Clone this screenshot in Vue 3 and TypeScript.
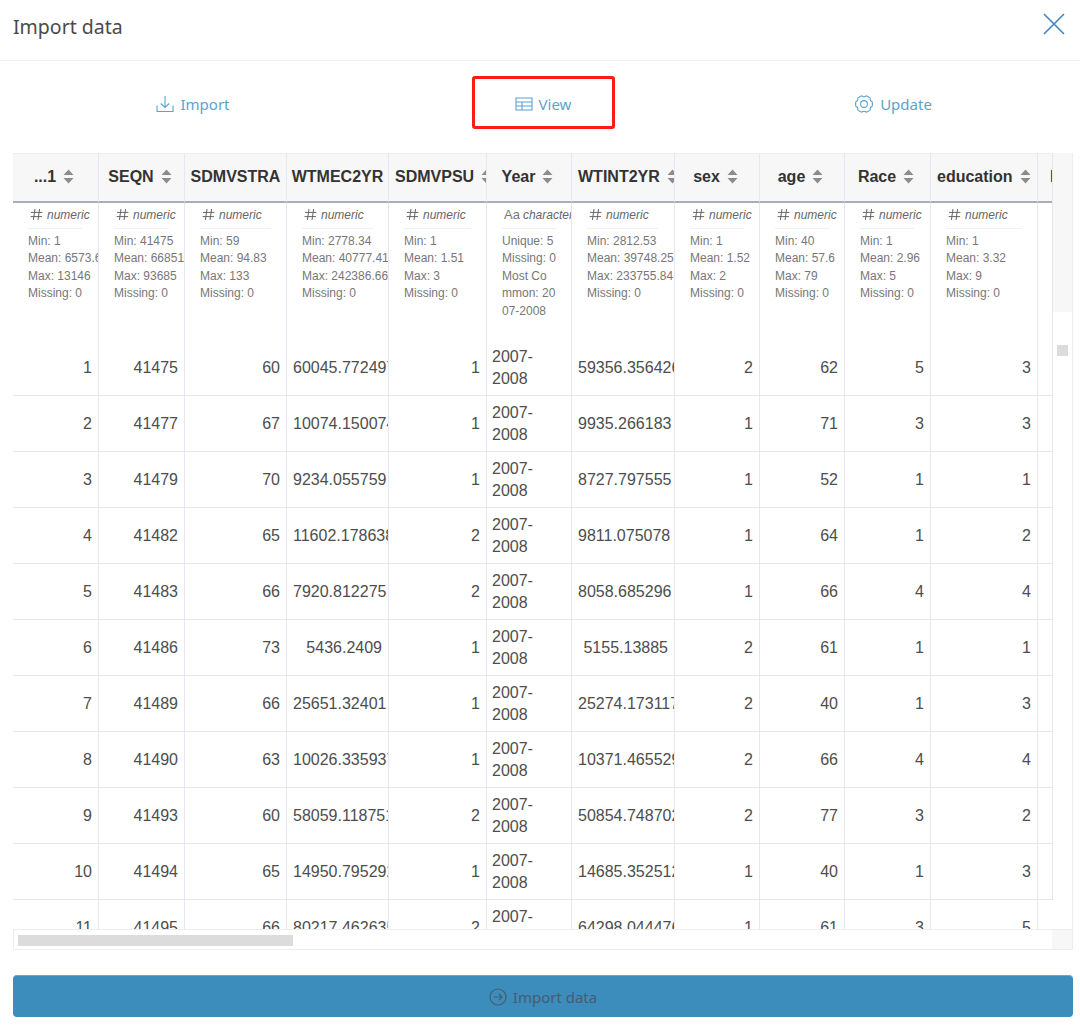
<script setup lang="ts">
interface Col { name: string; width: number; sort: boolean; kind: string; stats: string[]; }
const cols: Col[] = [
  { name: '...1', width: 86, sort: true, kind: 'numeric', stats: ['Min: 1', 'Mean: 6573.68', 'Max: 13146', 'Missing: 0'] },
  { name: 'SEQN', width: 86, sort: true, kind: 'numeric', stats: ['Min: 41475', 'Mean: 66851', 'Max: 93685', 'Missing: 0'] },
  { name: 'SDMVSTRA', width: 102, sort: false, kind: 'numeric', stats: ['Min: 59', 'Mean: 94.83', 'Max: 133', 'Missing: 0'] },
  { name: 'WTMEC2YR', width: 102, sort: false, kind: 'numeric', stats: ['Min: 2778.34', 'Mean: 40777.41', 'Max: 242386.66', 'Missing: 0'] },
  { name: 'SDMVPSU', width: 98, sort: true, kind: 'numeric', stats: ['Min: 1', 'Mean: 1.51', 'Max: 3', 'Missing: 0'] },
  { name: 'Year', width: 85, sort: true, kind: 'character', stats: ['Unique: 5', 'Missing: 0', 'Most Co', 'mmon: 20', '07-2008'] },
  { name: 'WTINT2YR', width: 103, sort: true, kind: 'numeric', stats: ['Min: 2812.53', 'Mean: 39748.25', 'Max: 233755.84', 'Missing: 0'] },
  { name: 'sex', width: 85, sort: true, kind: 'numeric', stats: ['Min: 1', 'Mean: 1.52', 'Max: 2', 'Missing: 0'] },
  { name: 'age', width: 85, sort: true, kind: 'numeric', stats: ['Min: 40', 'Mean: 57.6', 'Max: 79', 'Missing: 0'] },
  { name: 'Race', width: 86, sort: true, kind: 'numeric', stats: ['Min: 1', 'Mean: 2.96', 'Max: 5', 'Missing: 0'] },
  { name: 'education', width: 107, sort: true, kind: 'numeric', stats: ['Min: 1', 'Mean: 3.32', 'Max: 9', 'Missing: 0'] },
];
const rows: string[][] = [
  ['1', '41475', '60', '60045.772497', '1', '2007-2008', '59356.356426', '2', '62', '5', '3'],
  ['2', '41477', '67', '10074.150074', '1', '2007-2008', '9935.266183', '1', '71', '3', '3'],
  ['3', '41479', '70', '9234.055759', '1', '2007-2008', '8727.797555', '1', '52', '1', '1'],
  ['4', '41482', '65', '11602.178638', '2', '2007-2008', '9811.075078', '1', '64', '1', '2'],
  ['5', '41483', '66', '7920.812275', '2', '2007-2008', '8058.685296', '1', '66', '4', '4'],
  ['6', '41486', '73', '5436.2409', '1', '2007-2008', '5155.13885', '2', '61', '1', '1'],
  ['7', '41489', '66', '25651.32401', '1', '2007-2008', '25274.173117', '2', '40', '1', '3'],
  ['8', '41490', '63', '10026.335937', '1', '2007-2008', '10371.465529', '2', '66', '4', '4'],
  ['9', '41493', '60', '58059.118751', '2', '2007-2008', '50854.748702', '2', '77', '3', '2'],
  ['10', '41494', '65', '14950.795292', '1', '2007-2008', '14685.352512', '1', '40', '1', '3'],
  ['11', '41495', '66', '80217.462635', '2', '2007-2008', '64298.044476', '1', '61', '3', '5'],
];
const yearIndex = 5;
</script>

<template>
  <div class="modal">
    <header class="head">
      <h1 class="title">Import data</h1>
      <button class="close" type="button" aria-label="Close">
        <svg width="24" height="24" viewBox="0 0 24 24"><path d="M2 2 L22 22 M22 2 L2 22" /></svg>
      </button>
    </header>

    <nav class="tabs">
      <div class="tab">
        <svg width="18" height="18" viewBox="0 0 18 18"><path d="M1 10.5V16.5H17V10.5M9 1V12.5M4.8 8.5L9 12.5L13.2 8.5" /></svg>
        <span>Import</span>
      </div>
      <div class="tab">
        <svg width="18" height="14" viewBox="0 0 18 14"><path d="M1 1H17V13H1ZM1 5H17M1 9H17M7 5V13" /></svg>
        <span>View</span>
      </div>
      <div class="tab">
        <svg width="20" height="20" viewBox="0 0 20 20"><path d="M7.2 1.9C8 1.5 8.6 2.8 10 2.8S12 1.5 12.8 1.9L15.8 3.6C16.6 4.1 15.8 5.2 16.5 6.4S18.4 7.5 18.4 8.4V11.6C18.4 12.5 17.2 12.4 16.5 13.6S16.6 15.9 15.8 16.4L12.8 18.1C12 18.5 11.4 17.2 10 17.2S8 18.5 7.2 18.1L4.2 16.4C3.4 15.9 4.2 14.8 3.5 13.6S1.6 12.5 1.6 11.6V8.4C1.6 7.5 2.8 7.6 3.5 6.4S3.4 4.1 4.2 3.6Z" /><circle cx="10" cy="10" r="3.4" /></svg>
        <span>Update</span>
      </div>
      <div class="highlight"></div>
    </nav>

    <section class="grid">
      <div class="viewport">
        <table class="data">
          <colgroup>
            <col v-for="c in cols" :key="c.name" :style="{ width: c.width + 'px' }" />
            <col class="extra" />
          </colgroup>
          <thead>
            <tr class="names">
              <th v-for="c in cols" :key="c.name" :class="{ nosort: !c.sort }">
                <span class="name">{{ c.name }}</span>
                <svg v-if="c.sort" class="sort" width="11" height="15" viewBox="0 0 11 15"><path d="M5.5 0.5L10.5 6H0.5ZM0.5 9H10.5L5.5 14.5Z" /></svg>
              </th>
              <th class="cut"><span class="name">l</span></th>
            </tr>
            <tr class="summary">
              <td v-for="c in cols" :key="c.name">
                <div class="kind">
                  <svg v-if="c.kind === 'numeric'" class="hash" width="13" height="13" viewBox="0 0 13 13"><path d="M5 1L3.4 12M9.6 1L8 12M1 4.4H12.4M0.6 8.6H12" /></svg>
                  <span v-else class="aa">Aa</span>
                  <em>{{ c.kind }}</em>
                </div>
                <div class="stats">
                  <div v-for="s in c.stats" :key="s">{{ s }}</div>
                </div>
              </td>
              <td></td>
            </tr>
          </thead>
          <tbody>
            <tr v-for="(r, i) in rows" :key="i">
              <td v-for="(v, j) in r" :key="j" :class="{ left: j === yearIndex }">{{ v }}</td>
              <td></td>
            </tr>
          </tbody>
        </table>
      </div>
      <div class="vbar">
        <div class="vtop"></div>
        <div class="vline"></div>
        <div class="vthumb"></div>
      </div>
      <div class="hbar"><div class="hthumb"></div></div>
      <div class="corner"></div>
    </section>

    <div class="foot">
      <button class="submit" type="button">
        <svg width="18" height="18" viewBox="0 0 18 18"><circle cx="9" cy="9" r="8" /><path d="M4.8 9H13M10 6L13 9L10 12" /></svg>
        <span>Import data</span>
      </button>
    </div>
  </div>
</template>

<style>
html, body { margin: 0; background: #fff; }
</style>

<style scoped>
.modal {
  width: 1080px;
  height: 1025px;
  display: flex;
  flex-direction: column;
  overflow: hidden;
  font-family: "Noto Sans", "Open Sans", sans-serif;
  background: #fff;
}
.head {
  height: 61px;
  flex: none;
  display: flex;
  align-items: center;
  justify-content: space-between;
  padding: 0 14px 7px 13px;
  box-sizing: border-box;
  border-bottom: 1px solid #f0f0f0;
}
.title {
  margin: 0;
  font-size: 19.5px;
  font-weight: 400;
  color: #4a4a4a;
}
.close { padding: 0; border: 0; background: none; height: 24px; margin-top: -5px; }
.close svg { display: block; fill: none; stroke: #3f84bd; stroke-width: 1.6; }
.tabs {
  position: relative;
  height: 92px;
  flex: none;
  display: flex;
  align-items: center;
  padding: 0 0 7px 18px;
  box-sizing: border-box;
}
.tab {
  flex: none;
  width: 350px;
  display: flex;
  align-items: center;
  justify-content: center;
  gap: 6px;
  color: #5ba3cf;
  font-size: 15px;
}
.tab svg { fill: none; stroke: #5ba3cf; stroke-width: 1.1; }
.highlight {
  position: absolute;
  left: 472px;
  top: 15px;
  width: 143px;
  height: 53px;
  box-sizing: border-box;
  border: 3px solid #fb1c16;
  border-radius: 3px;
}
.grid {
  width: 1060px;
  margin-left: 13px;
  height: 797px;
  flex: none;
  display: grid;
  grid-template-columns: 1039px 21px;
  grid-template-rows: 776px 21px;
  box-sizing: border-box;
}
.viewport { overflow: hidden; border-top: 1px solid #efefef; box-sizing: border-box; }
.data {
  table-layout: fixed;
  width: 1170px;
  border-collapse: separate;
  border-spacing: 0;
  font-family: "Liberation Sans", Arial, sans-serif;
  font-size: 16px;
  color: #4d4d4d;
}
.data th, .data td {
  overflow: hidden;
  box-sizing: border-box;
  border-right: 1px solid #e5e7f1;
}
.names th {
  height: 49px;
  padding: 0 9px 2px 6px;
  background: #f7f7f7;
  border-bottom: 2px solid #a9adb8;
  color: #333;
  font-weight: 700;
  font-size: 16px;
  text-align: center;
  white-space: nowrap;
}
.names th.nosort { padding: 0 2px 2px; }
.names th.cut { text-align: left; padding-left: 12px; border-right: 0; }
.name { vertical-align: middle; }
.sort { margin-left: 7px; vertical-align: middle; fill: #8c8c8c; }
.summary td {
  height: 137px;
  padding: 3px 15px 0;
  vertical-align: top;
  font-size: 12px;
  color: #777;
  white-space: nowrap;
}
.kind {
  box-sizing: content-box;
  padding: 0 0 4px 2px;
  margin-bottom: 4px;
  height: 18px;
  line-height: 18px;
  border-bottom: 1px solid #f1f1f1;
  color: #666;
}
.hash { margin-right: 4px; vertical-align: -2px; fill: none; stroke: #666; stroke-width: 1; }
.aa { font-size: 13px; margin-right: 3px; color: #777; }
.kind em { font-style: italic; }
.stats { line-height: 17.4px; }
tbody td {
  height: 56px;
  padding: 0 6px;
  text-align: right;
  white-space: nowrap;
  border-bottom: 1px solid #e5e7f1;
  line-height: 22px;
}
tbody td.left { text-align: left; white-space: normal; padding: 0 6px 0 5px; }
.vbar {
  position: relative;
  border-right: 1px solid #ededed;
  box-sizing: border-box;
}
.vtop { height: 159px; background: #f7f7f7; }
.vline { position: absolute; left: 0; top: 0; width: 1px; height: 747px; background: #e5e7f1; }
.vthumb {
  position: absolute;
  left: 5px;
  top: 192px;
  width: 11px;
  height: 11px;
  background: #dcdcdc;
}
.hbar {
  border: 1px solid #ededed;
  border-right: 0;
  box-sizing: border-box;
  padding: 5px 4px;
}
.hthumb { width: 275px; height: 11px; background: #dcdcdc; }
.corner { background: #f7f7f7; border: 1px solid #ededed; border-left: 0; box-sizing: border-box; }
.foot { padding: 25px 7px 0 13px; }
.submit {
  width: 100%;
  height: 42px;
  display: flex;
  align-items: center;
  justify-content: center;
  gap: 6px;
  padding: 0;
  border: 0;
  border-top: 1px solid #6fa5c7;
  border-radius: 4px;
  background: #3c8dbc;
  color: #465c70;
  font-family: "Noto Sans", "Open Sans", sans-serif;
  font-size: 15px;
}
.submit svg { fill: none; stroke: #465c70; stroke-width: 1.2; }
</style>
